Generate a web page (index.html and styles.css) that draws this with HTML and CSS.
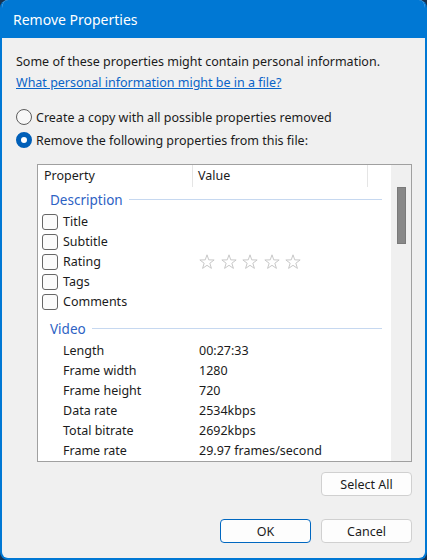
FILE: index.html
```html
<!DOCTYPE html>
<html>
<head>
<meta charset="utf-8">
<link rel="stylesheet" href="styles.css">
</head>
<body>
<div class="window">
  <div class="titlebar">Remove Properties</div>
  <div class="content">
    <p class="intro">Some of these properties might contain personal information.</p>
    <a class="link" href="#">What personal information might be in a file?</a>
    <div class="options">
      <div class="radio-row"><span class="radio"></span><span>Create a copy with all possible properties removed</span></div>
      <div class="radio-row"><span class="radio checked"></span><span>Remove the following properties from this file:</span></div>
    </div>
    <div class="listbox">
      <div class="list">
        <div class="header">
          <div class="hcol hprop">Property</div>
          <div class="hcol hval">Value</div>
        </div>
        <div class="group"><span class="gname">Description</span><span class="rule"></span></div>
        <div class="row"><div class="name"><span class="check"></span>Title</div><div class="value"></div></div>
        <div class="row"><div class="name"><span class="check"></span>Subtitle</div><div class="value"></div></div>
        <div class="row"><div class="name"><span class="check"></span>Rating</div>
          <div class="value stars">
            <svg viewBox="0 0 16 16" class="star"><polygon points="8,0.8 9.76,5.87 15.13,5.98 10.85,9.23 12.41,14.37 8,11.3 3.59,14.37 5.15,9.23 0.87,5.98 6.24,5.87"/></svg>
            <svg viewBox="0 0 16 16" class="star"><polygon points="8,0.8 9.76,5.87 15.13,5.98 10.85,9.23 12.41,14.37 8,11.3 3.59,14.37 5.15,9.23 0.87,5.98 6.24,5.87"/></svg>
            <svg viewBox="0 0 16 16" class="star"><polygon points="8,0.8 9.76,5.87 15.13,5.98 10.85,9.23 12.41,14.37 8,11.3 3.59,14.37 5.15,9.23 0.87,5.98 6.24,5.87"/></svg>
            <svg viewBox="0 0 16 16" class="star"><polygon points="8,0.8 9.76,5.87 15.13,5.98 10.85,9.23 12.41,14.37 8,11.3 3.59,14.37 5.15,9.23 0.87,5.98 6.24,5.87"/></svg>
            <svg viewBox="0 0 16 16" class="star"><polygon points="8,0.8 9.76,5.87 15.13,5.98 10.85,9.23 12.41,14.37 8,11.3 3.59,14.37 5.15,9.23 0.87,5.98 6.24,5.87"/></svg>
          </div>
        </div>
        <div class="row"><div class="name"><span class="check"></span>Tags</div><div class="value"></div></div>
        <div class="row"><div class="name"><span class="check"></span>Comments</div><div class="value"></div></div>
        <div class="group video"><span class="gname">Video</span><span class="rule"></span></div>
        <div class="row"><div class="name plain">Length</div><div class="value">00:27:33</div></div>
        <div class="row"><div class="name plain">Frame width</div><div class="value">1280</div></div>
        <div class="row"><div class="name plain">Frame height</div><div class="value">720</div></div>
        <div class="row"><div class="name plain">Data rate</div><div class="value">2534kbps</div></div>
        <div class="row"><div class="name plain">Total bitrate</div><div class="value">2692kbps</div></div>
        <div class="row"><div class="name plain">Frame rate</div><div class="value">29.97 frames/second</div></div>
      </div>
      <div class="scrollbar"><div class="thumb"></div></div>
    </div>
    <div class="select-row"><button class="btn">Select All</button></div>
    <div class="footer"><button class="btn ok">OK</button><button class="btn">Cancel</button></div>
  </div>
</div>
</body>
</html>
```
FILE: styles.css
```css
html, body {
  margin: 0;
  padding: 0;
  background: #17324f;
}
body {
  width: 427px;
  height: 560px;
  overflow: hidden;
  font-family: "Noto Sans", "Liberation Sans", sans-serif;
  font-size: 12.5px;
  color: #1b1b1b;
}
.window {
  box-sizing: border-box;
  width: 427px;
  height: 560px;
  border: 2px solid #0078d4;
  border-top: 0;
  border-radius: 8px;
  background: #f0f0f0;
  overflow: hidden;
}
.titlebar {
  height: 38px;
  background: #0078d4;
  color: #ffffff;
  font-size: 14px;
  line-height: 40px;
  padding-left: 11px;
}
.content {
  padding: 0 13px 0 14px;
}
.intro {
  margin: 14px 0 0;
  line-height: 20px;
}
.link {
  display: block;
  margin-top: 1px;
  line-height: 20px;
  color: #0a64c8;
  text-decoration: underline;
}
.options {
  margin-top: 14px;
  display: flex;
  flex-direction: column;
  gap: 3px;
}
.radio-row {
  display: flex;
  align-items: center;
  height: 20px;
  gap: 4px;
}
.radio {
  box-sizing: border-box;
  width: 16px;
  height: 16px;
  border-radius: 50%;
  border: 1px solid #5c5c5c;
  background: #f7f7f7;
}
.radio.checked {
  border: 5px solid #005fb8;
  background: #ffffff;
}
.listbox {
  margin: 14px 0 0 21px;
  box-sizing: border-box;
  width: 375px;
  height: 298px;
  border: 1px solid #a0a0a0;
  background: #ffffff;
  display: flex;
  overflow: hidden;
}
.list {
  width: 353px;
  flex: none;
}
.header {
  display: flex;
  height: 22px;
  line-height: 22px;
}
.hcol {
  box-sizing: border-box;
  border-right: 1px solid #e5e5e5;
}
.hprop {
  width: 155px;
  padding-left: 6px;
}
.hval {
  width: 175px;
  padding-left: 5px;
}
.group {
  display: flex;
  align-items: center;
  height: 25px;
  padding-left: 12px;
  padding-right: 9px;
  color: #2d62c4;
  font-size: 13.5px;
}
.group.video {
  margin-top: 4px;
  height: 25px;
}
.rule {
  flex: 1;
  height: 1px;
  background: #c6d8f0;
  margin-left: 6px;
}
.row {
  display: grid;
  grid-template-columns: 155px 1fr;
  height: 20px;
  line-height: 20px;
}
.name {
  display: flex;
  align-items: center;
  padding-left: 4px;
  gap: 5px;
}
.name.plain {
  padding-left: 25px;
}
.check {
  box-sizing: border-box;
  width: 16px;
  height: 16px;
  border: 1px solid #666666;
  border-radius: 3px;
  background: #fbfbfb;
}
.value {
  padding-left: 6px;
}
.stars {
  display: flex;
  align-items: center;
  gap: 5.6px;
}
.star {
  width: 16px;
  height: 16px;
}
.star polygon {
  fill: none;
  stroke: #c8c8c8;
  stroke-width: 1;
  stroke-linejoin: miter;
}
.scrollbar {
  flex: 1;
  background: #f0f0f0;
  padding-top: 22px;
  display: flex;
  justify-content: center;
}
.thumb {
  box-sizing: border-box;
  width: 9px;
  height: 57px;
  background: #888888;
  border: 1px solid #7a7a7a;
}
.select-row {
  margin-top: 10px;
  display: flex;
  justify-content: flex-end;
}
.footer {
  margin-top: 23px;
  display: flex;
  justify-content: flex-end;
  gap: 10px;
}
.btn {
  box-sizing: border-box;
  width: 91px;
  height: 24px;
  border: 1px solid #d0d0d0;
  border-radius: 4px;
  background: #fdfdfd;
  font-family: inherit;
  font-size: 12.5px;
  color: #1b1b1b;
  padding: 0;
}
.btn.ok {
  border-color: #0067c0;
}
```
